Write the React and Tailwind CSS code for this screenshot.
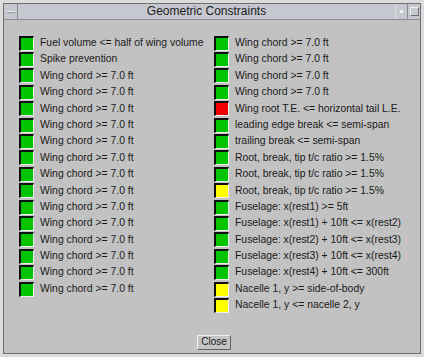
const left = [
  ["g", "Fuel volume <= half of wing volume"],
  ["g", "Spike prevention"],
  ...Array.from({ length: 14 }, () => ["g", "Wing chord >= 7.0 ft"]),
];

const right = [
  ["g", "Wing chord >= 7.0 ft"],
  ["g", "Wing chord >= 7.0 ft"],
  ["g", "Wing chord >= 7.0 ft"],
  ["g", "Wing chord >= 7.0 ft"],
  ["r", "Wing root T.E. <= horizontal tail L.E."],
  ["g", "leading edge break <= semi-span"],
  ["g", "trailing break <= semi-span"],
  ["g", "Root, break, tip t/c ratio >= 1.5%"],
  ["g", "Root, break, tip t/c ratio >= 1.5%"],
  ["y", "Root, break, tip t/c ratio >= 1.5%"],
  ["g", "Fuselage: x(rest1) >= 5ft"],
  ["g", "Fuselage: x(rest1) + 10ft <= x(rest2)"],
  ["g", "Fuselage: x(rest2) + 10ft <= x(rest3)"],
  ["g", "Fuselage: x(rest3) + 10ft <= x(rest4)"],
  ["g", "Fuselage: x(rest4) + 10ft <= 300ft"],
  ["y", "Nacelle 1, y >= side-of-body"],
  ["y", "Nacelle 1, y <= nacelle 2, y"],
];

const fills = { g: "bg-[#00c400]", r: "bg-[#f00000]", y: "bg-[#ffff00]" };

function Row({ state, label }) {
  return (
    <div className="flex items-center h-[16.4px]">
      <div
        className={`w-[15px] h-[15px] shrink-0 border-t-2 border-l-2 border-b border-r border-t-[#101010] border-l-[#101010] border-b-[#f0f0f0] border-r-[#f0f0f0] ${fills[state]}`}
      />
      <span className="ml-[6px] whitespace-nowrap text-[10.4px] leading-none text-[#1a1a1a]">
        {label}
      </span>
    </div>
  );
}

export default function App() {
  return (
    <div
      className="w-[424px] h-[357px] bg-[#dcdcdc] p-[3px] overflow-hidden"
      style={{ fontFamily: '"Liberation Sans", Arial, sans-serif' }}
    >
      <div className="h-full flex flex-col border border-[#707070] bg-[#c2c2c2]">
        <div className="h-[16px] flex items-stretch bg-[#c6c8d0] border-b border-[#8a8a90]">
          <div className="w-[14px] border-r border-[#8a8a90] flex items-center justify-center">
            <div className="w-[8px] h-[2px] bg-[#f4f4f4] border-b border-[#909090]" />
          </div>
          <div className="flex-1 text-center text-[12px] leading-[15px] text-[#202020]">
            Geometric Constraints
          </div>
          <div className="w-[12px] flex items-center justify-center border-l border-[#dadada]">
            <div className="w-[3px] h-[3px] bg-[#f0f0f0]" />
          </div>
          <div className="w-[13px] flex items-center justify-center border-l border-[#8a8a90]">
            <div className="w-[9px] h-[9px] border border-t-[#f0f0f0] border-l-[#f0f0f0] border-b-[#707070] border-r-[#707070]" />
          </div>
        </div>
        <div className="flex-1 flex flex-col">
          <div className="grid grid-cols-[195px_1fr] pl-[15px] pt-[15px]">
            <div className="flex flex-col">
              {left.map(([s, l], i) => (
                <Row key={i} state={s} label={l} />
              ))}
            </div>
            <div className="flex flex-col">
              {right.map(([s, l], i) => (
                <Row key={i} state={s} label={l} />
              ))}
            </div>
          </div>
          <div className="flex justify-center mt-[21px] pl-[4px]">
            <button className="w-[34px] h-[15px] bg-[#c4c4c4] border border-t-[#f0f0f0] border-l-[#f0f0f0] border-b-[#606060] border-r-[#606060] text-[10px] leading-none text-[#202020]">
              Close
            </button>
          </div>
        </div>
      </div>
    </div>
  );
}
